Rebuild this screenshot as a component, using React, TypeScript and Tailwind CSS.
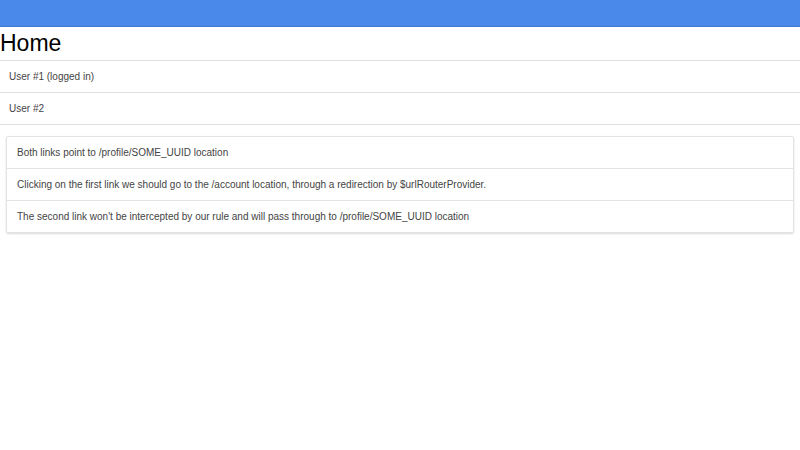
export default function App() {
  const users = ['User #1 (logged in)', 'User #2'];
  const notes = [
    'Both links point to /profile/SOME_UUID location',
    'Clicking on the first link we should go to the /account location, through a redirection by $urlRouterProvider.',
    "The second link won't be intercepted by our rule and will pass through to /profile/SOME_UUID location",
  ];

  return (
    <div className="min-h-screen bg-white font-['Liberation_Sans',Arial,sans-serif]">
      <div className="h-[27px] bg-[#4a89ea] border-b border-[#3f78d0]" />
      <h1 className="text-[23px] leading-[33px] text-black">Home</h1>
      <div className="border-t border-[#e0e0e0]">
        {users.map((u) => (
          <div key={u} className="h-[32px] flex items-center px-[9px] text-[10px] text-[#444] border-b border-[#e0e0e0]">
            {u}
          </div>
        ))}
      </div>
      <div className="mx-[6px] mt-[11px] border border-[#e3e3e3] rounded-[2px] shadow-[0_1px_2px_rgba(0,0,0,0.15)]">
        {notes.map((n, i) => (
          <div
            key={i}
            className={`flex items-center px-[10px] text-[10px] text-[#444] ${i < notes.length - 1 ? 'h-[32px] border-b border-[#e3e3e3]' : 'h-[31px]'}`}
          >
            {n}
          </div>
        ))}
      </div>
    </div>
  );
}
